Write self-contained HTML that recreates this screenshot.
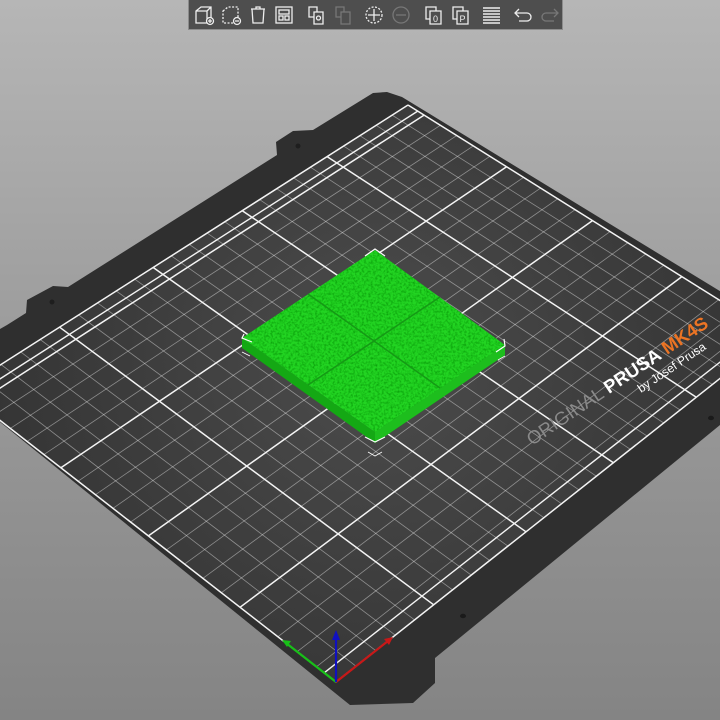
<!DOCTYPE html>
<html><head><meta charset="utf-8"><style>
html,body{margin:0;padding:0;width:720px;height:720px;overflow:hidden;background:linear-gradient(#b6b6b6,#9a9a9a 50%,#848484);}
svg{position:absolute;left:0;top:0}
#tb{position:absolute;left:188px;top:0;width:375px;height:30px;background:#4e4e4e;border:1px solid #8c8c8c;border-top:none;box-sizing:border-box}
</style></head><body>
<svg id="s" width="720" height="720" viewBox="0 0 720 720">
<defs>
<radialGradient id="gg" cx="375" cy="360" r="420" gradientUnits="userSpaceOnUse">
<stop offset="0" stop-color="#4c4c4c"/><stop offset="0.6" stop-color="#3c3c3c"/><stop offset="1" stop-color="#333"/></radialGradient>
<filter id="tx" x="0" y="0" width="1" height="1"><feTurbulence type="fractalNoise" baseFrequency="0.45" numOctaves="2" seed="3"/><feColorMatrix values="0 0 0 0 0  0 0 0 0 0.25  0 0 0 0 0  0 0 0 1.4 -0.55"/><feComposite in2="SourceGraphic" operator="in"/></filter>
</defs>
<polygon fill="#2f2f2f" points="373,93 387,92 402,97 800,340 720,425 435,658 435,683 413,703 350,705 340,697 0,422 0,329 7,325 26,313 27,300 53,286 68,287 277,155 276,142 293,131 313,130"/>
<g id="grid"></g>
<circle cx="298" cy="146" r="2.5" fill="#1e1e1e"/>
<circle cx="52" cy="302" r="2.5" fill="#1e1e1e"/>
<ellipse cx="463" cy="616" rx="3" ry="2.2" fill="#1a1a1a"/>
<ellipse cx="711" cy="418" rx="3" ry="2.2" fill="#1a1a1a"/>
<g transform="translate(532,446) rotate(-34)" font-family="Liberation Sans, sans-serif" font-weight="bold">
<text x="0" y="0" font-size="18.5" fill="#8a8a8a" font-weight="normal">ORIGINAL <tspan fill="#fff" font-weight="bold">PRUSA</tspan> <tspan fill="#ec7424" font-weight="bold">MK4S</tspan></text>
<text x="120" y="17" font-size="12" fill="#fff" font-weight="normal">by Josef Prusa</text>
</g>
<g id="model">
<polygon fill="#14a814" points="242,338 375,432 505,345 505,355 375,443 242,348"/>
<polygon fill="#1dbe1d" points="375,432 505,345 505,355 375,443"/>
<polygon fill="#22d422" points="375,250 505,345 375,432 242,338"/>
<polygon fill="#22d422" points="375,250 505,345 375,432 242,338" filter="url(#tx)"/>
<line x1="308" y1="294" x2="440" y2="388" stroke="#159a15" stroke-width="1.5"/>
<line x1="440" y1="297" x2="308" y2="385" stroke="#159a15" stroke-width="1.5"/>
</g>
<g stroke="#fff" stroke-width="1.2" fill="none">
<path d="M365,256 L375,249 L385,256"/>
<path d="M244,334 L242,338 L252,342"/>
<path d="M365,437 L375,442 L385,437"/>
<path d="M496,352 L505,346 L504,339"/>
<path d="M242,352 L250,356" stroke-width="0.8"/><path d="M498,360 L505,356" stroke-width="0.8"/>
<path d="M368,452 L375,456 L382,452" stroke-width="0.8"/>
</g>
<g stroke-width="2.2">
<line x1="336" y1="682" x2="286" y2="643" stroke="#18c018"/>
<line x1="336" y1="682" x2="388" y2="641" stroke="#c81818"/>
<line x1="336" y1="682" x2="336" y2="638" stroke="#1010c0"/>
</g>
<polygon points="282,640 291,641 287,647" fill="#18c018"/>
<polygon points="393,637 384,639 389,645" fill="#c81818"/>
<polygon points="336,630 332,640 340,640" fill="#1010c0"/>
</svg>
<div id="tb">
<svg width="375" height="30" viewBox="0 0 375 30" fill="none" stroke="#eee" stroke-width="1.3">
<g transform="translate(6,5)"><path d="M1,6 L6,2 H16 V14 L12,18 H1 Z M1,6 H12 V18 M12,6 L16,2"/><circle cx="15" cy="16" r="3.5" fill="#4e4e4e"/><path d="M15,14 V18 M13,16 H17"/></g>
<g transform="translate(33,5)" stroke-dasharray="2 1.5"><path d="M1,6 L6,2 H16 V14 L12,18 H1 Z"/></g>
<g transform="translate(33,5)"><circle cx="15" cy="16" r="3.5" fill="#4e4e4e"/><path d="M13,16 H17"/></g>
<g transform="translate(60,5)"><path d="M2,4 H16 M7,4 V2 H11 V4 M3,4 L4,18 H14 L15,4"/></g>
<g transform="translate(86,5)"><rect x="1" y="2" width="16" height="16"/><rect x="4" y="5" width="10" height="4"/><rect x="4" y="11" width="4" height="4"/><rect x="10" y="11" width="4" height="4"/></g>
<g transform="translate(118,5)"><path d="M2,2 H10 V12 H2 Z"/><path d="M7,7 H16 V19 H7 Z" fill="#4e4e4e"/><circle cx="11.5" cy="13" r="2"/></g>
<g transform="translate(145,5)" stroke="#777"><path d="M2,2 H10 V12 H2 Z"/><path d="M7,7 H16 V19 H7 Z" fill="#4e4e4e"/></g>
<g transform="translate(175,5)"><circle cx="10" cy="10" r="8" stroke-dasharray="2 1.5"/><path d="M10,4 V16 M4,10 H16"/></g>
<g transform="translate(202,5)" stroke="#777"><circle cx="10" cy="10" r="8"/><path d="M5,10 H15"/></g>
<g transform="translate(235,5)"><path d="M2,2 H12 V14 H2 Z"/><path d="M6,6 H17 V19 H6 Z" fill="#4e4e4e"/><text x="9" y="17" font-size="9" font-family="Liberation Sans" fill="#eee" stroke="none">0</text></g>
<g transform="translate(262,5)"><path d="M2,2 H12 V14 H2 Z"/><path d="M6,6 H17 V19 H6 Z" fill="#4e4e4e"/><text x="8.5" y="17" font-size="9" font-family="Liberation Sans" fill="#eee" stroke="none">P</text></g>
<g transform="translate(293,5)" stroke-width="1.6"><path d="M1,3 H18 M1,6 H18 M1,9 H18 M1,12 H18 M1,15 H18 M1,18 H18"/></g>
<g transform="translate(324,5)"><path d="M6,4 L2,8 L6,12 M2,8 H14 A4,4 0 0 1 14,16 H6"/></g>
<g transform="translate(351,5)" stroke="#777"><path d="M14,4 L18,8 L14,12 M18,8 H6 A4,4 0 0 0 6,16 H14"/></g>
</svg></div>
<script>
(function(){
var src=[[0,0],[250,0],[0,210],[250,210]],dst=[[336,682],[775,335],[-39,390],[408,105]];
var A=[],b=[];
for(var i=0;i<4;i++){var u=src[i][0],v=src[i][1],x=dst[i][0],y=dst[i][1];
A.push([u,v,1,0,0,0,-u*x,-v*x]);b.push(x);A.push([0,0,0,u,v,1,-u*y,-v*y]);b.push(y);}
var n=8;for(var c=0;c<n;c++){var p=c;for(var r=c+1;r<n;r++)if(Math.abs(A[r][c])>Math.abs(A[p][c]))p=r;
var t=A[c];A[c]=A[p];A[p]=t;t=b[c];b[c]=b[p];b[p]=t;
for(var r=0;r<n;r++){if(r==c)continue;var f=A[r][c]/A[c][c];for(var k=c;k<n;k++)A[r][k]-=f*A[c][k];b[r]-=f*b[c];}}
var h=[];for(var i=0;i<n;i++)h.push(b[i]/A[i][i]);
function P(u,v){var w=h[6]*u+h[7]*v+1;return [(h[0]*u+h[1]*v+h[2])/w,(h[3]*u+h[4]*v+h[5])/w];}
var s='';var q=[P(0,0),P(250,0),P(250,210),P(0,210)];
s+='<polygon fill="url(#gg)" points="'+q.map(function(p){return p.join(',')}).join(' ')+'"/>';
function L(a,b2,w,col){s+='<line x1="'+a[0].toFixed(1)+'" y1="'+a[1].toFixed(1)+'" x2="'+b2[0].toFixed(1)+'" y2="'+b2[1].toFixed(1)+'" stroke="'+col+'" stroke-width="'+w+'"/>';}
for(var x=0;x<=250;x+=10){var mj=(x%50==0);L(P(x,0),P(x,210),mj?1.5:0.8,mj?'#f4f4f4':'rgba(255,255,255,0.42)');}
for(var y=0;y<=210;y+=10){var mj=(y%50==0)||y==210;L(P(0,y),P(250,y),mj?1.5:0.8,mj?'#f4f4f4':'rgba(255,255,255,0.42)');}
L(P(0,204),P(250,204),1.4,'#f4f4f4');L(P(0,6),P(250,6),1.4,'#f4f4f4');
document.getElementById('grid').innerHTML=s;
})();
</script>
</body></html>
